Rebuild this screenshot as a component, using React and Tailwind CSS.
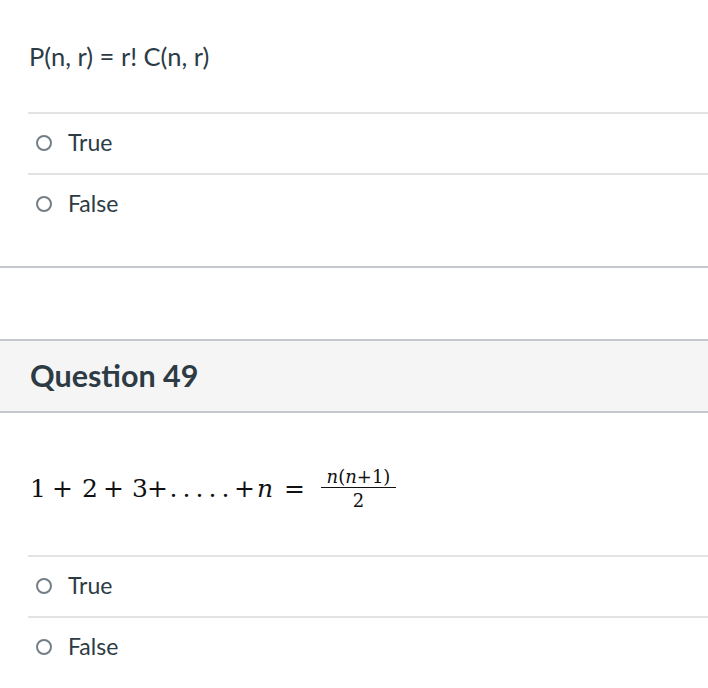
import React from 'react';

const Radio = () => (
  <span className="shrink-0 inline-block w-[16px] h-[16px] rounded-full border-2 border-[#737e86] bg-white" />
);

const Answer = ({ label }) => (
  <div className="flex items-center h-[61px] border-t-2 border-[#e1e3e5] pl-[8px] pb-[2px]">
    <Radio />
    <span className="ml-[16px] text-[23px] text-[#2d3b45]">{label}</span>
  </div>
);

// rough KaTeX look: each glyph gets its own box so spacing matches
const G = ({ className = '', children }) => (
  <span className={`inline-block text-center leading-none ${className}`}>{children}</span>
);

const MathLine = () => (
  <div className="flex items-center h-[40px] text-[#111] font-['DejaVu_Serif',serif] text-[25px]">
    <G className="w-[13px]">1</G>
    <G className="ml-[9px] w-[20px]">+</G>
    <G className="ml-[10px] w-[13px]">2</G>
    <G className="ml-[8px] w-[20px]">+</G>
    <G className="ml-[9px] w-[12px]">3</G>
    <G className="ml-[3px] w-[20px]">+</G>
    {[0, 1, 2, 3, 4].map((i) => (
      <G key={i} className="w-[13px]">.</G>
    ))}
    <G className="ml-[2px] w-[20px]">+</G>
    <G className="w-[22px] italic">n</G>
    <G className="ml-[8px] w-[20px]">=</G>
    <span className="ml-[17px] w-[75px] inline-flex flex-col items-center">
      <span className="h-[22px] leading-[22px] text-[18px] -mb-[1px]">
        <span className="italic">n</span>(<span className="italic">n</span>+1)
      </span>
      <span className="w-full h-[1px] bg-[#111]" />
      <span className="h-[22px] leading-[22px] text-[18px] pt-[2px]">2</span>
    </span>
  </div>
);

export default function App() {
  return (
    <div className="w-[708px] h-[688px] overflow-hidden bg-white font-['Lato',sans-serif] text-[#2d3b45]">
      <div className="pl-[28px]">
        <div className="h-[112px] flex items-center pl-[1px] text-[25.5px]">P(n, r) = r! C(n, r)</div>
        <Answer label="True" />
        <Answer label="False" />
      </div>
      <div className="h-[32px]" />
      <div className="border-t-2 border-[#c4c8cc] h-[73px]" />
      <div className="h-[74px] bg-[#f5f5f5] border-y-2 border-[#c4c8cc] flex items-center pl-[30px]">
        <h2 className="text-[30.5px] font-bold text-[#2d3b45]">Question 49</h2>
      </div>
      <div className="pl-[28px]">
        <div className="h-[142px] pt-[55px] pl-[2px]">
          <MathLine />
        </div>
        <Answer label="True" />
        <Answer label="False" />
      </div>
    </div>
  );
}
